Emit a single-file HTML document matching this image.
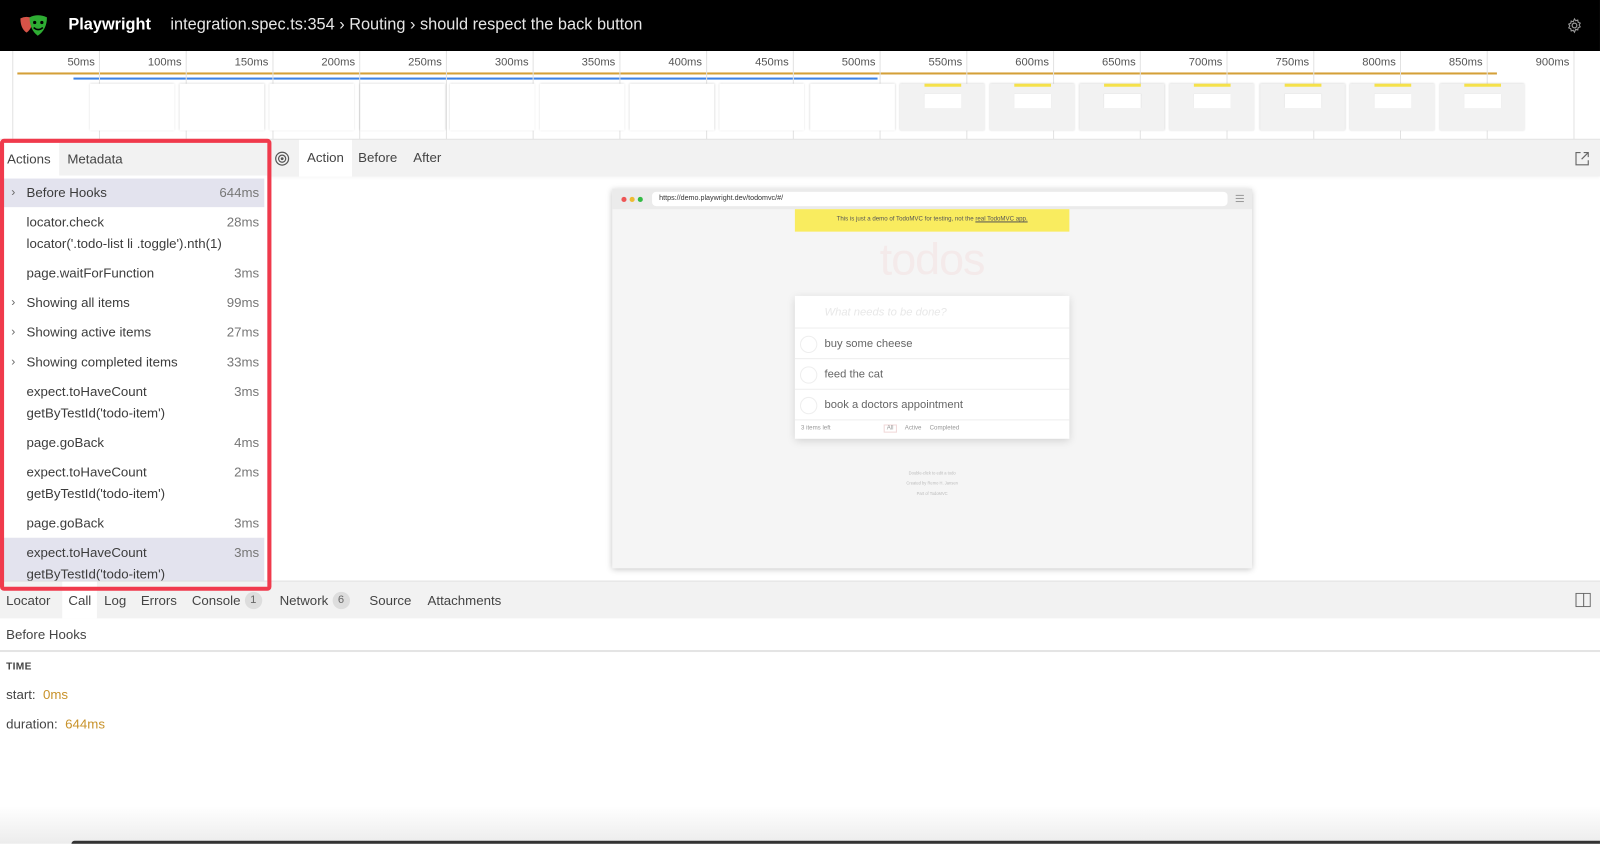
<!DOCTYPE html>
<html><head><meta charset="utf-8">
<style>
*{box-sizing:border-box;margin:0;padding:0}
html,body{width:1600px;height:844px;overflow:hidden;background:#fff;font-family:"Liberation Sans",Arial,sans-serif;color:#333}
#w{position:absolute;left:0;top:0;width:1568px;height:827px;transform:scale(1.0204);transform-origin:0 0;overflow:hidden;background:#fff}
.a{position:absolute}
.hdr{left:0;top:0;width:1568px;height:50px;background:#000}
.tl{left:0;top:50px;width:1568px;height:87px;background:#fff;border-bottom:1px solid #ddd}
.tick{position:absolute;top:0;width:1px;height:87px;background:#e2e2e2}
.tlab{position:absolute;top:5px;font-size:11px;color:#555;text-align:right;width:60px}
.th{position:absolute;top:32px;width:83px;height:46px;background:#fff;box-shadow:0 0 2px rgba(0,0,0,.2)}
.th.g{background:#f2f2f2}
.th.g:before{content:"";position:absolute;left:24px;top:0;width:36px;height:3px;background:#f5e14a}
.th.g:after{content:"";position:absolute;left:24px;top:10px;width:36px;height:14px;background:#fff;box-shadow:0 0 1px rgba(0,0,0,.2)}
.bar{position:absolute;height:2px}
.row{position:absolute;left:3px;width:256px;font-size:13px;color:#3c3c3c}
.row .t{position:absolute;right:5px;top:0;color:#777}
.row .c{position:absolute;left:8px;top:0;color:#666;font-size:12px}
.tab{position:absolute;font-size:13px;color:#444;top:0;height:100%;display:flex;align-items:center;padding:0 6px}
.badge{display:inline-block;background:#ddd;border-radius:9px;min-width:17px;height:17px;line-height:17px;text-align:center;font-size:11px;color:#666;margin-left:4px}
.it{height:30px;border-bottom:1px solid #eee;font-size:11px;color:#666;line-height:30px;padding-left:29px;position:relative}
.it:before{content:"";position:absolute;left:5px;top:7px;width:15px;height:15px;border-radius:50%;border:1px solid #eee}
</style></head><body><div id="w">
<div class="a hdr">
  <svg class="a" style="left:18px;top:13px" width="30" height="24" viewBox="0 0 30 24">
    <path d="M2 5 Q8 2 14 5 Q14 15 8 19 Q2 15 2 5Z" fill="#d65348"/>
    <path d="M11 4 Q19 0 28 4 Q28 16 19 22 Q11 16 11 4Z" fill="#2ead33"/>
    <circle cx="16" cy="9" r="1.6" fill="#000"/><circle cx="23" cy="9" r="1.6" fill="#000"/>
    <path d="M15 14 Q19.5 18 24 14" stroke="#000" stroke-width="1.5" fill="none"/>
  </svg>
  <div class="a" style="left:67px;top:16px;font-size:16px;font-weight:bold;color:#fff">Playwright</div>
  <div class="a" style="left:167px;top:16px;font-size:16px;color:#e6e6e6">integration.spec.ts:354 › Routing › should respect the back button</div>
  <svg class="a" style="left:1535px;top:17px" width="16" height="16" viewBox="0 0 16 16"><circle cx="8" cy="8" r="2.3" fill="none" stroke="#999" stroke-width="1.2"/><path d="M8 1.5l1.2 1.8 2-.6.4 2.1 2 .9-1 1.8 1 1.8-2 .9-.4 2.1-2-.6L8 14.5l-1.2-1.8-2 .6-.4-2.1-2-.9 1-1.8-1-1.8 2-.9.4-2.1 2 .6z" fill="none" stroke="#999" stroke-width="1.1"/></svg>
</div>
<div class="a tl" id="tl">
  <div class="bar" style="left:17px;top:21px;width:1450px;background:#d4a038"></div>
  <div class="bar" style="left:72px;top:26px;width:788px;background:#3b82e6"></div>
</div>
<!-- left pane -->
<div class="a" style="left:0;top:137px;width:262px;height:433px;background:#fff">
  <div class="a" style="left:0;top:3px;width:262px;height:32px;background:#f2f2f2"></div>
  <div class="a" style="left:3px;top:3px;width:55px;height:32px;background:#fff;font-size:13px;line-height:32px;padding-left:4px;color:#444">Actions</div>
  <div class="a" style="left:66px;top:3px;font-size:13px;line-height:32px;color:#444">Metadata</div>
  <div class="a" style="left:3px;top:38px;width:256px;height:28px;background:#e3e3ee"></div>
  <div class="a" style="left:3px;top:390px;width:256px;height:44px;background:#e3e3ee"></div>
  <div class="row" style="top:44px"><span class="c">›</span><span style="margin-left:23px">Before Hooks</span><span class="t">644ms</span></div>
  <div class="row" style="top:73px"><span style="margin-left:23px">locator.check</span><span class="t">28ms</span></div>
  <div class="row" style="top:94px"><span style="margin-left:23px">locator('.todo-list li .toggle').nth(1)</span></div>
  <div class="row" style="top:123px"><span style="margin-left:23px">page.waitForFunction</span><span class="t">3ms</span></div>
  <div class="row" style="top:152px"><span class="c">›</span><span style="margin-left:23px">Showing all items</span><span class="t">99ms</span></div>
  <div class="row" style="top:181px"><span class="c">›</span><span style="margin-left:23px">Showing active items</span><span class="t">27ms</span></div>
  <div class="row" style="top:210px"><span class="c">›</span><span style="margin-left:23px">Showing completed items</span><span class="t">33ms</span></div>
  <div class="row" style="top:239px"><span style="margin-left:23px">expect.toHaveCount</span><span class="t">3ms</span></div>
  <div class="row" style="top:260px"><span style="margin-left:23px">getByTestId('todo-item')</span></div>
  <div class="row" style="top:289px"><span style="margin-left:23px">page.goBack</span><span class="t">4ms</span></div>
  <div class="row" style="top:318px"><span style="margin-left:23px">expect.toHaveCount</span><span class="t">2ms</span></div>
  <div class="row" style="top:339px"><span style="margin-left:23px">getByTestId('todo-item')</span></div>
  <div class="row" style="top:368px"><span style="margin-left:23px">page.goBack</span><span class="t">3ms</span></div>
  <div class="row" style="top:397px"><span style="margin-left:23px">expect.toHaveCount</span><span class="t">3ms</span></div>
  <div class="row" style="top:418px"><span style="margin-left:23px">getByTestId('todo-item')</span></div>
</div>
<div class="a" style="left:262px;top:137px;width:1px;height:433px;background:#ddd"></div>
<!-- right toolbar -->
<div class="a" style="left:263px;top:137px;width:1305px;height:36px;background:#f2f2f2;box-shadow:0 2px 3px rgba(0,0,0,.04)">
  <svg class="a" style="left:6px;top:11px" width="15" height="15" viewBox="0 0 15 15"><circle cx="7.5" cy="7.5" r="6.3" fill="none" stroke="#555" stroke-width="1.2"/><circle cx="7.5" cy="7.5" r="3.5" fill="none" stroke="#555" stroke-width="1.2"/><circle cx="7.5" cy="7.5" r="1.4" fill="#555"/></svg>
  <div class="a" style="left:30px;top:0;width:52px;height:36px;background:#fff;font-size:13px;line-height:36px;text-align:center;color:#444">Action</div>
  <div class="a" style="left:88px;top:0;font-size:13px;line-height:36px;color:#444">Before</div>
  <div class="a" style="left:142px;top:0;font-size:13px;line-height:36px;color:#444">After</div>
  <svg class="a" style="left:1280px;top:11px" width="15" height="15" viewBox="0 0 15 15"><path d="M6 1.5H1.5v12h12V9M9 1.5h4.5V6M13.5 1.5L7 8" fill="none" stroke="#666" stroke-width="1.1"/></svg>
</div>
<!-- screenshot -->
<div class="a" style="left:600px;top:185px;width:627px;height:372px;background:#f5f5f5;box-shadow:0 1px 6px rgba(0,0,0,.25)">
  <div class="a" style="left:0;top:0;width:627px;height:20px;background:#ebebeb"></div>
  <div class="a" style="left:9px;top:8px;width:5px;height:5px;border-radius:50%;background:#e55"></div>
  <div class="a" style="left:17px;top:8px;width:5px;height:5px;border-radius:50%;background:#eb3"></div>
  <div class="a" style="left:25px;top:8px;width:5px;height:5px;border-radius:50%;background:#3b4"></div>
  <div class="a" style="left:39px;top:3px;width:564px;height:14px;border-radius:4px;background:#fff;font-size:7px;line-height:14px;padding-left:7px;color:#333">https://demo.playwright.dev/todomvc/#/</div>
  <div class="a" style="left:611px;top:6px;width:8px;height:1px;background:#999;box-shadow:0 3px #999,0 6px #999"></div>
  <div class="a" style="left:179px;top:20px;width:269px;height:22px;background:#f9ec5f;font-size:6px;line-height:20px;text-align:center;color:#555">This is just a demo of TodoMVC for testing, not the <u>real TodoMVC app.</u></div>
  <div class="a" style="left:179px;top:40px;width:269px;height:52px;font-size:44px;font-weight:100;color:#f4eaea;text-align:center;line-height:60px;letter-spacing:-1px">todos</div>
  <div class="a" style="left:179px;top:105px;width:269px;height:140px;background:#fff;box-shadow:0 2px 8px rgba(0,0,0,.15)">
    <div style="height:32px;border-bottom:1px solid #eee;font-size:11px;font-style:italic;color:#e8e8e8;line-height:32px;padding-left:29px">What needs to be done?</div>
    <div class="it">buy some cheese</div>
    <div class="it">feed the cat</div>
    <div class="it">book a doctors appointment</div>
    <div style="font-size:6px;color:#999;line-height:16px;padding-left:6px">3 items left<span style="margin-left:52px;border:1px solid #f0d8d8;padding:0 2px">All</span><span style="margin-left:8px">Active</span><span style="margin-left:8px">Completed</span></div>
  </div>
  <div class="a" style="left:179px;top:274px;width:269px;text-align:center;font-size:4px;line-height:10px;color:#bbb">Double-click to edit a todo<br>Created by Remo H. Jansen<br>Part of TodoMVC</div>
</div>
<!-- bottom tabs -->
<div class="a" style="left:0;top:569px;width:1568px;height:1px;background:#ddd"></div>
<div class="a" style="left:0;top:570px;width:1568px;height:36px;background:#f2f2f2">
  <div class="tab" style="left:0">Locator</div>
  <div class="tab" style="left:61px;background:#fff">Call</div>
  <div class="tab" style="left:96px">Log</div>
  <div class="tab" style="left:132px">Errors</div>
  <div class="tab" style="left:182px">Console<span class="badge">1</span></div>
  <div class="tab" style="left:268px">Network<span class="badge">6</span></div>
  <div class="tab" style="left:356px">Source</div>
  <div class="tab" style="left:413px">Attachments</div>
  <svg class="a" style="left:1544px;top:11px" width="15" height="14" viewBox="0 0 15 14"><rect x="0.5" y="0.5" width="14" height="13" fill="none" stroke="#666"/><path d="M8 0.5v13" stroke="#666"/></svg>
</div>
<div class="a" style="left:6px;top:614px;font-size:13px;color:#444">Before Hooks</div>
<div class="a" style="left:0;top:637px;width:1568px;height:2px;background:#e4e4e4"></div>
<div class="a" style="left:6px;top:648px;font-size:10px;font-weight:bold;color:#444;letter-spacing:.3px">TIME</div>
<div class="a" style="left:6px;top:673px;font-size:13px;color:#444">start:&nbsp; <span style="color:#c8922a">0ms</span></div>
<div class="a" style="left:6px;top:702px;font-size:13px;color:#444">duration:&nbsp; <span style="color:#c8922a">644ms</span></div>
<div class="a" style="left:0;top:790px;width:1568px;height:37px;background:linear-gradient(#fff,#ececec)"></div>
<div class="a" style="left:70px;top:824px;width:1498px;height:3px;background:#333;border-radius:3px 0 0 0"></div>
<!-- red highlight -->
<div class="a" style="left:0;top:136px;width:266px;height:443px;border:4px solid #f03a4c;border-radius:4px"></div>
</div>
<script>
var tl=document.getElementById('tl'),h='';
var labs=['50ms','100ms','150ms','200ms','250ms','300ms','350ms','400ms','450ms','500ms','550ms','600ms','650ms','700ms','750ms','800ms','850ms','900ms'];
for(var i=0;i<18;i++){var x=12+85*(i+1);h+='<div class="tick" style="left:'+x+'px"></div><div class="tlab" style="left:'+(x-64)+'px">'+labs[i]+'</div>';}
h+='<div class="tick" style="left:12px"></div>';
for(var j=0;j<16;j++){var x2=88+88.2*j;h+='<div class="th'+(j>=9?' g':'')+'" style="left:'+x2+'px"></div>';}
tl.insertAdjacentHTML('beforeend',h);
</script>
</body></html>
